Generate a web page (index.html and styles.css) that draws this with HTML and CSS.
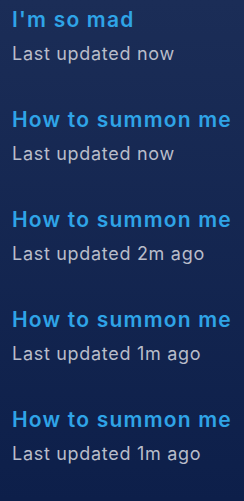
FILE: index.html
```html
<!DOCTYPE html>
<html lang="en">
<head>
    <meta charset="UTF-8">
    <meta name="viewport" content="width=device-width, initial-scale=1.0">
    <title>Notes</title>
    <link rel="stylesheet" href="styles.css">
</head>
<body>
    <div class="note-list">
        <div class="note">
            <div class="note-title">I'm so mad</div>
            <div class="note-updated">Last updated now</div>
        </div>
        <div class="note">
            <div class="note-title">How to summon me</div>
            <div class="note-updated">Last updated now</div>
        </div>
        <div class="note">
            <div class="note-title">How to summon me</div>
            <div class="note-updated">Last updated 2m ago</div>
        </div>
        <div class="note">
            <div class="note-title">How to summon me</div>
            <div class="note-updated">Last updated 1m ago</div>
        </div>
        <div class="note">
            <div class="note-title">How to summon me</div>
            <div class="note-updated">Last updated 1m ago</div>
        </div>
    </div>
</body>
</html>
```

FILE: styles.css
```css
html, body {
    height: 100%;
}

body {
    margin: 0;
    background: linear-gradient(180deg, #1b2d57 0%, #0d1f4a 100%);
    font-family: Inter, "Noto Sans", sans-serif;
}

.note-list {
    display: flex;
    flex-direction: column;
    gap: 42px;
    padding: 7px 12px;
}

.note {
    display: flex;
    flex-direction: column;
    gap: 10px;
}

.note-title {
    font-size: 21px;
    font-weight: 600;
    line-height: 26px;
    letter-spacing: 1.2px;
    color: #2fa4e7;
    white-space: nowrap;
}

.note-updated {
    font-size: 18px;
    line-height: 22px;
    letter-spacing: 0.7px;
    color: #b9bdca;
    white-space: nowrap;
}
```
